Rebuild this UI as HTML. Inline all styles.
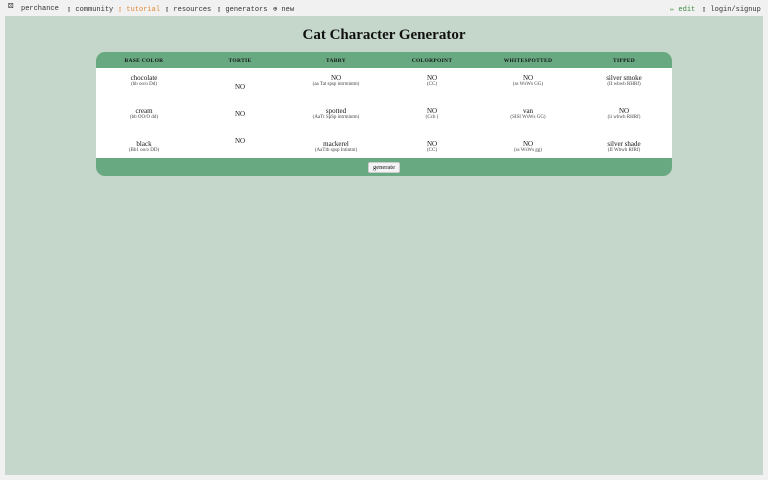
<!DOCTYPE html>
<html><head><style>
body{margin:0;width:768px;height:480px;background:#f1f1f1;font-family:"Liberation Serif",serif;position:relative;overflow:hidden}
.top{position:absolute;top:0;left:0;right:0;height:16px;font:7px "Liberation Mono",monospace;color:#333}
.top span{position:absolute;top:5px}
.main{position:absolute;left:5px;top:16px;width:758px;height:459px;background:#c5d6cb}
h1{position:absolute;top:27px;left:0;width:768px;text-align:center;font-size:15px;margin:0;font-weight:bold;color:#111}
.tbl{position:absolute;left:96px;top:52px;width:576px;height:124px;background:#69a982;border-radius:9px;overflow:hidden}
.hd{position:absolute;top:0;height:16px;width:576px}
.hd div,.row div{position:absolute;width:96px;text-align:center}
.hd div{top:6px;font-size:5.5px;font-weight:bold;letter-spacing:.3px;color:#111}
.body{position:absolute;top:16px;left:0;width:576px;height:90px;background:#fff}
.row div{font-size:7px;color:#111;line-height:8px}
.row small{display:block;font-size:5px;line-height:6px;color:#444}
.btn{position:absolute;left:272px;top:110px;width:30px;height:9px;background:#f4f4f4;border:1px solid #ccc;border-radius:2px;font-size:6.5px;text-align:center;line-height:9px;color:#111}
</style></head><body>
<div class="top">
<span style="left:8px;font-size:9px;top:1px">⚄</span><span style="left:21px">perchance</span>
<span style="left:67px">▯ community</span>
<span style="left:118px;color:#e08a3a">▯ tutorial</span>
<span style="left:165px">▯ resources</span>
<span style="left:217px">▯ generators</span>
<span style="left:273px">⊕ new</span>
<span style="left:670px;color:#3a8a3a">✏ edit</span>
<span style="left:702px">▯ login/signup</span>
</div>
<div class="main"></div>
<h1>Cat Character Generator</h1>
<div class="tbl">
<div class="hd"><div style="left:0">BASE COLOR</div><div style="left:96px">TORTIE</div><div style="left:192px">TABBY</div><div style="left:288px">COLORPOINT</div><div style="left:384px">WHITESPOTTED</div><div style="left:480px">TIPPED</div></div>
<div class="body">
<div class="row">
<div style="left:0;top:6px">chocolate<small>(bb oo/o Dd)</small></div>
<div style="left:96px;top:15px">NO</div>
<div style="left:192px;top:6px">NO<small>(aa Tat spsp intrmintm)</small></div>
<div style="left:288px;top:6px">NO<small>(CC)</small></div>
<div style="left:384px;top:6px">NO<small>(ss WsWs GG)</small></div>
<div style="left:480px;top:6px">silver smoke<small>(II wbwb RHRf)</small></div>
</div>
<div class="row">
<div style="left:0;top:39px">cream<small>(bb OO/O dd)</small></div>
<div style="left:96px;top:42px">NO</div>
<div style="left:192px;top:39px">spotted<small>(AaTt SpSp intrmintm)</small></div>
<div style="left:288px;top:39px">NO<small>(Ccb )</small></div>
<div style="left:384px;top:39px">van<small>(SISI WsWs GG)</small></div>
<div style="left:480px;top:39px">NO<small>(ii wbwb RHRf)</small></div>
</div>
<div class="row">
<div style="left:0;top:72px">black<small>(Bb1 oo/o DD)</small></div>
<div style="left:96px;top:69px">NO</div>
<div style="left:192px;top:72px">mackerel<small>(AaTtb spsp Intintm)</small></div>
<div style="left:288px;top:72px">NO<small>(CC)</small></div>
<div style="left:384px;top:72px">NO<small>(ss WsWs gg)</small></div>
<div style="left:480px;top:72px">silver shade<small>(II Wbwb RfRf)</small></div>
</div>
</div>
<div class="btn">generate</div>
</div>
</body></html>
